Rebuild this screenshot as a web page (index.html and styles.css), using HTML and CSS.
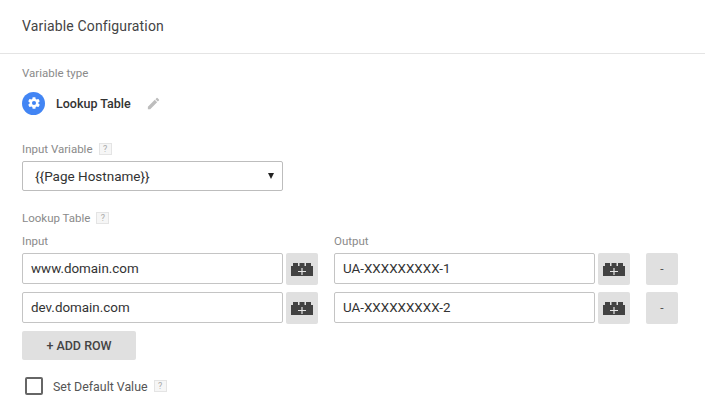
FILE: index.html
```html
<!DOCTYPE html>
<html lang="en">
<head>
    <meta charset="UTF-8">
    <meta name="viewport" content="width=device-width, initial-scale=1.0">
    <title>Variable Configuration</title>
    <link rel="stylesheet" href="styles.css">
</head>
<body>
    <div class="title-bar">Variable Configuration</div>
    <div class="content">
        <div class="label">Variable type</div>
        <div class="type-row">
            <span class="type-icon">
                <svg width="14" height="14" viewBox="0 0 24 24"><path fill="#fff" d="M19.4 13c.04-.32.1-.66.1-1s-.06-.68-.1-1l2.1-1.65c.2-.15.25-.42.13-.64l-2-3.46c-.12-.22-.4-.3-.6-.22l-2.5 1c-.52-.4-1.08-.73-1.7-.98l-.37-2.65A.5.5 0 0 0 14 2h-4a.5.5 0 0 0-.5.42l-.37 2.65c-.62.25-1.18.59-1.7.98l-2.5-1c-.22-.08-.48 0-.6.22l-2 3.46c-.13.22-.07.49.12.64L4.57 11c-.04.32-.07.66-.07 1s.03.68.07 1l-2.11 1.65c-.19.15-.25.42-.12.64l2 3.46c.12.22.38.3.6.22l2.5-1c.52.4 1.08.73 1.7.98l.37 2.65c.04.24.25.42.5.42h4c.25 0 .46-.18.5-.42l.37-2.65c.62-.25 1.18-.59 1.7-.98l2.5 1c.22.08.48 0 .6-.22l2-3.46c.12-.22.07-.49-.13-.64L19.4 13zM12 15.5a3.5 3.5 0 1 1 0-7 3.5 3.5 0 0 1 0 7z"/></svg>
            </span>
            <span class="type-name">Lookup Table</span>
            <svg class="pencil" width="15" height="15" viewBox="0 0 24 24"><path fill="#bdbdbd" d="M3 17.25V21h3.75L17.81 9.94l-3.75-3.75L3 17.25zM20.71 7.04a1 1 0 0 0 0-1.41l-2.34-2.34a1 1 0 0 0-1.41 0l-1.83 1.83 3.75 3.75 1.83-1.83z"/></svg>
        </div>

        <div class="label label-help">Input Variable <span class="help">?</span></div>
        <div class="select-box">
            <span>{{Page Hostname}}</span>
            <span class="caret"></span>
        </div>

        <div class="label label-help table-label">Lookup Table <span class="help">?</span></div>
        <div class="table-grid">
            <div class="label col-head">Input</div>
            <div class="label col-head">Output</div>
            <div class="spacer"></div>

            <div class="cell"><div class="text-input">www.domain.com</div><button class="var-btn"><svg width="22" height="13" viewBox="0 0 22 13"><use href="#brick"/></svg></button></div>
            <div class="cell"><div class="text-input">UA-XXXXXXXXX-1</div><button class="var-btn"><svg width="22" height="13" viewBox="0 0 22 13"><use href="#brick"/></svg></button></div>
            <button class="remove-btn">-</button>

            <div class="cell"><div class="text-input">dev.domain.com</div><button class="var-btn"><svg width="22" height="13" viewBox="0 0 22 13"><use href="#brick"/></svg></button></div>
            <div class="cell"><div class="text-input">UA-XXXXXXXXX-2</div><button class="var-btn"><svg width="22" height="13" viewBox="0 0 22 13"><use href="#brick"/></svg></button></div>
            <button class="remove-btn">-</button>
        </div>
        <button class="add-row">+ ADD ROW</button>
        <div class="default-row">
            <span class="checkbox"></span>
            <span class="default-text">Set Default Value</span>
            <span class="help">?</span>
        </div>
    </div>

    <svg class="defs" width="0" height="0">
        <symbol id="brick" viewBox="0 0 22 13">
            <path fill="#424242" d="M0 3h2V0h5v3h1.500V0h5v3H15V0h5v3h2v10H0z"/>
            <path fill="#e4e4e4" d="M10.400 5h1.200v2.900H15v1.200h-3.400V12h-1.200V9.100H7V7.900h3.400z"/>
        </symbol>
    </svg>
</body>
</html>
```

FILE: styles.css
```css
body {
    margin: 0;
    padding: 0;
    background-color: white;
    font-family: Roboto, sans-serif;
    color: #333;
    height: 412px;
    overflow: hidden;
}
.title-bar {
    height: 54px;
    line-height: 52px;
    padding-left: 22px;
    font-size: 14px;
    color: #444;
    border-bottom: 1px solid #e4e4e4;
    box-sizing: border-box;
    letter-spacing: 0.15px;
}
.content {
    padding: 11px 0 0 22px;
}
.label {
    font-size: 11.5px;
    line-height: 16px;
    color: #8a8a8a;
}
.type-row {
    display: flex;
    align-items: center;
    margin-top: 10px;
    height: 24px;
}
.type-icon {
    width: 23px;
    height: 23px;
    border-radius: 50%;
    background: #4285f4;
    display: flex;
    align-items: center;
    justify-content: center;
}
.type-name {
    font-size: 12.5px;
    font-weight: 500;
    color: #333;
    margin-left: 11px;
}
.pencil {
    margin-left: 15px;
}
.label-help {
    display: flex;
    align-items: center;
    gap: 6px;
    margin-top: 26px;
}
.help {
    display: inline-block;
    width: 11px;
    height: 10px;
    line-height: 10px;
    text-align: center;
    font-size: 9px;
    color: #aaa;
    background: #f6f6f6;
    border: 1px solid #e4e4e4;
}
.select-box {
    width: 261px;
    height: 30px;
    margin-top: 4px;
    padding: 0 8px 0 12px;
    border: 1px solid #bdbdbd;
    border-radius: 2px;
    box-sizing: border-box;
    display: flex;
    align-items: center;
    justify-content: space-between;
    font-size: 13.5px;
    color: #333;
}
.caret {
    width: 0;
    height: 0;
    border-left: 3px solid transparent;
    border-right: 3px solid transparent;
    border-top: 6px solid #222;
}
.table-label {
    margin-top: 19px;
}
.table-grid {
    display: grid;
    grid-template-columns: 296px 296px 33px;
    column-gap: 16px;
    row-gap: 7px;
    margin-top: 7px;
    width: 660px;
}
.col-head {
    margin-bottom: -3px;
}
.cell {
    display: flex;
    gap: 3px;
}
.text-input {
    width: 262px;
    height: 31px;
    line-height: 29px;
    padding-left: 8px;
    border: 1px solid #c4c4c4;
    border-radius: 2px;
    box-sizing: border-box;
    font-size: 13.4px;
    color: #333;
}
.var-btn, .remove-btn {
    width: 32px;
    height: 32px;
    padding: 0;
    border: none;
    border-radius: 2px;
    background: #e0e0e0;
    display: flex;
    align-items: center;
    justify-content: center;
    font-family: Roboto, sans-serif;
    font-size: 12px;
    color: #555;
}
.add-row {
    display: block;
    width: 114px;
    height: 29px;
    margin-top: 7px;
    padding: 0;
    border: none;
    border-radius: 2px;
    background: #e0e0e0;
    font-family: Roboto, sans-serif;
    font-size: 12.5px;
    font-weight: 500;
    color: #444;
}
.default-row {
    display: flex;
    align-items: center;
    margin: 17px 0 0 3px;
}
.checkbox {
    width: 14px;
    height: 14px;
    border: 2px solid #666;
    border-radius: 2px;
}
.default-text {
    font-size: 12.4px;
    color: #555;
    margin: 0 6px 0 10px;
}
.defs {
    display: none;
}
```
